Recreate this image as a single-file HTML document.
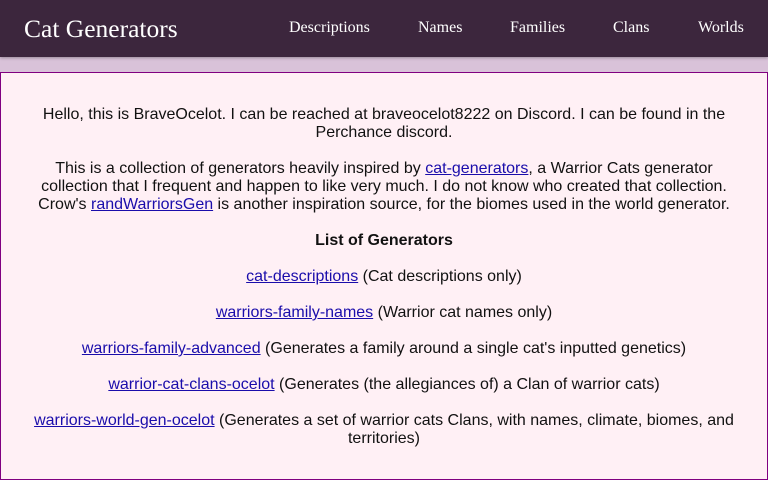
<!DOCTYPE html>
<html><head><style>
*{box-sizing:border-box}
body{margin:0;width:768px;height:480px;overflow:hidden;background:#d9c2d9;font-family:"Liberation Sans",sans-serif}
.hdr{position:absolute;left:0;top:0;width:768px;height:57px;background:#3c263d;box-shadow:0 1px 3px rgba(0,0,0,.3)}
.t{position:absolute;left:24px;top:13px;font:25.5px/32px "Liberation Serif",serif;color:#fff}
.n{position:absolute;top:18px;font:16px/20px "Liberation Serif",serif;color:#fff}
.box{position:absolute;left:0;top:72px;width:768px;height:408px;background:#fff0f5;border:1px solid #800080;padding:15px 32px 0;text-align:center;color:#111;font-size:16px;line-height:18px}
p{margin:18px 0}
a{color:#1a0dab}
</style></head><body>
<div class="hdr"><div class="t">Cat Generators</div>
<span class="n" style="left:289px">Descriptions</span>
<span class="n" style="left:418px">Names</span>
<span class="n" style="left:510px">Families</span>
<span class="n" style="left:613px">Clans</span>
<span class="n" style="left:698px">Worlds</span></div>
<div class="box">
<p>Hello, this is BraveOcelot. I can be reached at braveocelot8222 on Discord. I can be found in the Perchance discord.</p>
<p>This is a collection of generators heavily inspired by <a href="#">cat-generators</a>, a Warrior Cats generator collection that I frequent and happen to like very much. I do not know who created that collection. Crow's <a href="#">randWarriorsGen</a> is another inspiration source, for the biomes used in the world generator.</p>
<p><b>List of Generators</b></p>
<p><a href="#">cat-descriptions</a> (Cat descriptions only)</p>
<p><a href="#">warriors-family-names</a> (Warrior cat names only)</p>
<p><a href="#">warriors-family-advanced</a> (Generates a family around a single cat's inputted genetics)</p>
<p><a href="#">warrior-cat-clans-ocelot</a> (Generates (the allegiances of) a Clan of warrior cats)</p>
<p><a href="#">warriors-world-gen-ocelot</a> (Generates a set of warrior cats Clans, with names, climate, biomes, and territories)</p>
</div>
</body></html>
